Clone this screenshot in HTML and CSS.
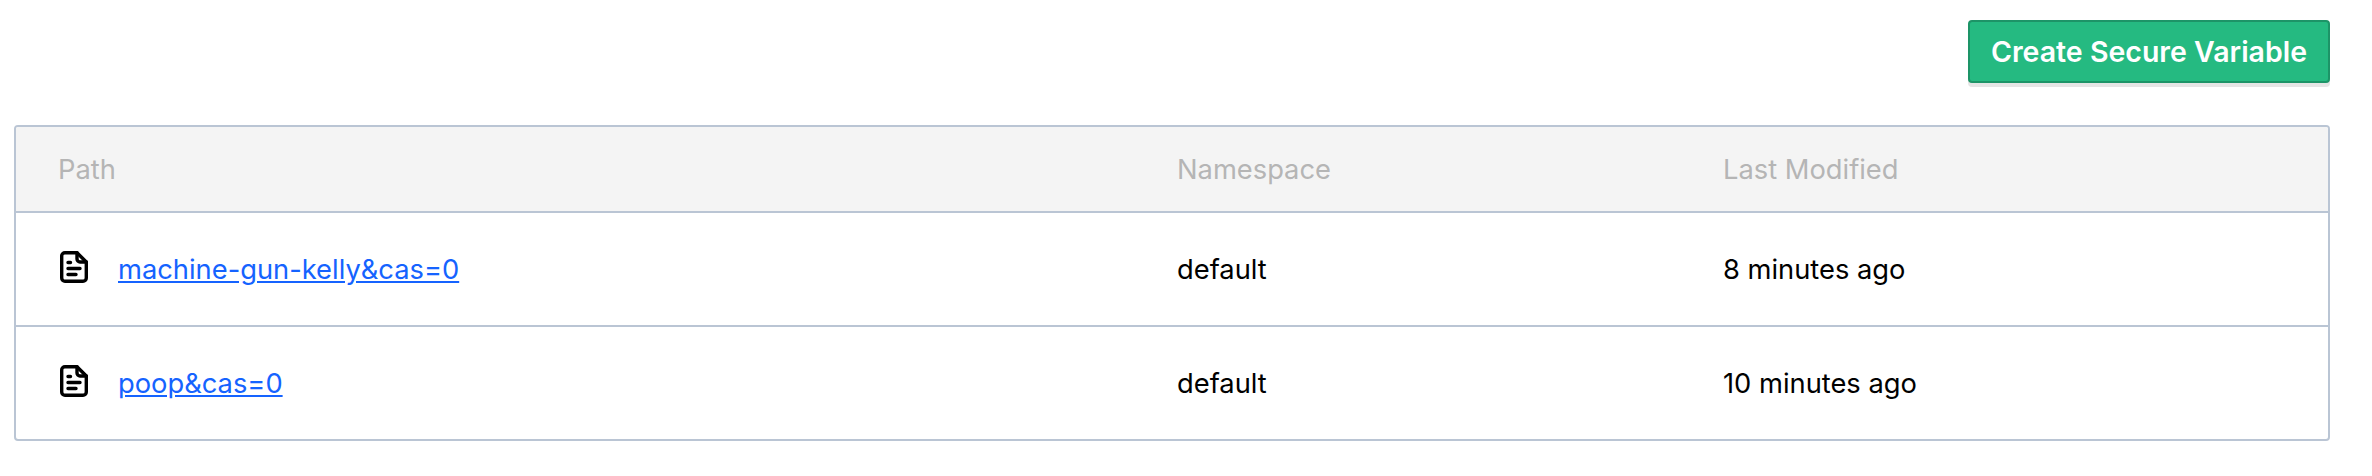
FILE: index.html
```html
<!DOCTYPE html>
<html lang="en">
<head>
    <meta charset="UTF-8">
    <title>Secure Variables</title>
    <link rel="stylesheet" href="styles.css">
</head>
<body>
    <div class="toolbar">
        <button type="button" class="create-btn">Create Secure Variable</button>
    </div>
    <div class="table-wrap">
        <table class="vars">
            <thead>
                <tr>
                    <th class="col-path">Path</th>
                    <th class="col-ns">Namespace</th>
                    <th>Last Modified</th>
                </tr>
            </thead>
            <tbody>
                <tr>
                    <td class="col-path">
                        <span class="path-cell">
                            <svg class="file-icon" viewBox="0 0 28 32" fill="none" stroke="#000" stroke-width="3.4" stroke-linejoin="round" stroke-linecap="round">
                                <path d="M5 1.700h12l9.300 9.300v16a3.300 3.300 0 0 1-3.300 3.300H5A3.300 3.300 0 0 1 1.700 27V5A3.300 3.300 0 0 1 5 1.700z"/>
                                <path d="M17 1.700V8a3 3 0 0 0 3 3h6.300"/>
                                <path d="M8 11.500h2.500M8 17.500h12M8 23.500h8"/>
                            </svg>
                            <a href="#">machine-gun-kelly&amp;cas=0</a>
                        </span>
                    </td>
                    <td>default</td>
                    <td>8 minutes ago</td>
                </tr>
                <tr>
                    <td class="col-path">
                        <span class="path-cell">
                            <svg class="file-icon" viewBox="0 0 28 32" fill="none" stroke="#000" stroke-width="3.4" stroke-linejoin="round" stroke-linecap="round">
                                <path d="M5 1.700h12l9.300 9.300v16a3.300 3.300 0 0 1-3.300 3.300H5A3.300 3.300 0 0 1 1.700 27V5A3.300 3.300 0 0 1 5 1.700z"/>
                                <path d="M17 1.700V8a3 3 0 0 0 3 3h6.300"/>
                                <path d="M8 11.500h2.500M8 17.500h12M8 23.500h8"/>
                            </svg>
                            <a href="#">poop&amp;cas=0</a>
                        </span>
                    </td>
                    <td>default</td>
                    <td>10 minutes ago</td>
                </tr>
            </tbody>
        </table>
    </div>
</body>
</html>
```

FILE: styles.css
```css
body { margin: 0; padding: 20px 42px 0 14px; background: #fff; color: #000; font-family: Inter, "Noto Sans", sans-serif; font-size: 27.3px; }
.toolbar { display: flex; justify-content: flex-end; margin-bottom: 42px; }
.create-btn { width: 362px; height: 63px; padding: 0; background: #25ba81; color: #fff; border: 2px solid #1d9467; border-radius: 4px; box-shadow: 0 4px 0 rgba(0, 0, 0, 0.1); font-family: inherit; font-size: 28.5px; font-weight: 600; }
.table-wrap { border: 2px solid #bac5d4; border-radius: 4px; overflow: hidden; }
.vars { width: 100%; border-collapse: collapse; table-layout: fixed; }
.vars th { height: 84px; padding: 0 0 0 42px; background: #f4f4f4; color: #b5b5b5; font-weight: 400; text-align: left; }
.vars td { height: 112px; padding: 0 0 0 42px; border-top: 2px solid #bac5d4; }
.col-path { width: 1077px; }
.col-ns { width: 504px; }
.path-cell { display: flex; align-items: center; gap: 30px; }
.file-icon { width: 28px; height: 32px; flex: none; margin-top: -4px; margin-left: 2px; }
.vars a { color: #1563ff; }
```
